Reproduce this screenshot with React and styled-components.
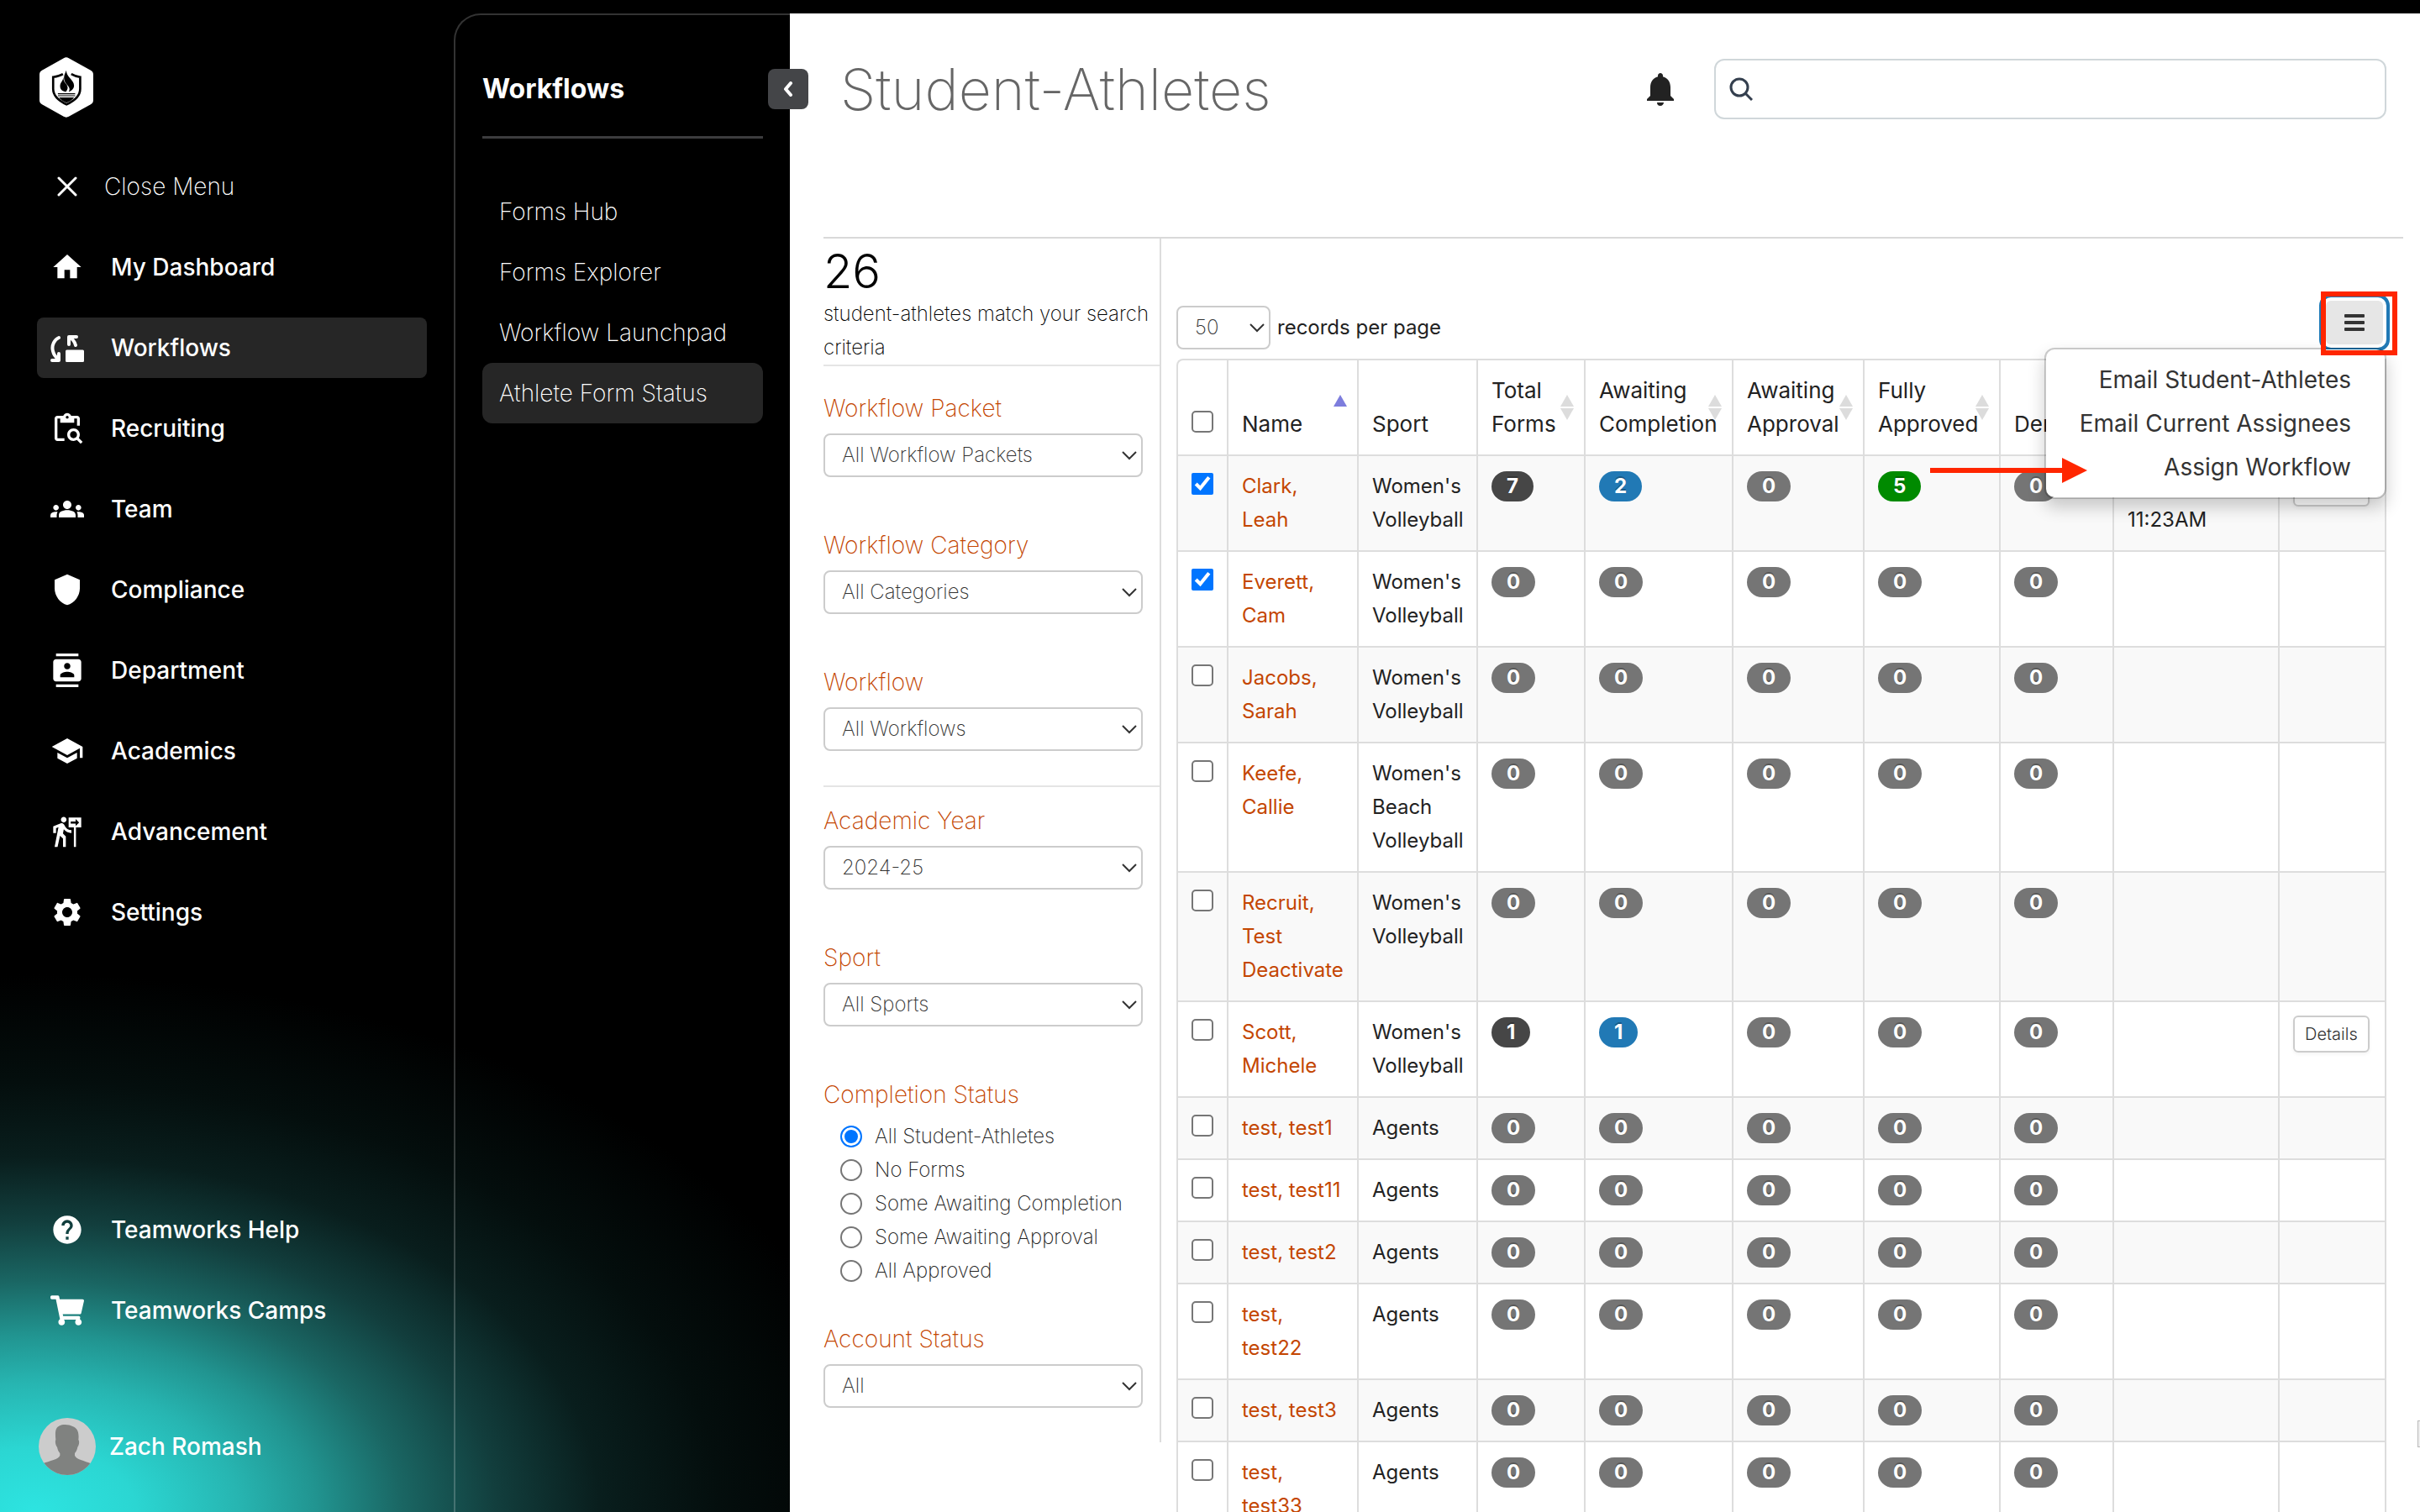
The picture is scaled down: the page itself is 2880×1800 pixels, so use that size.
import { useState } from 'react';
import styled, { createGlobalStyle, css } from 'styled-components';
import {
  MdContacts,
  MdFollowTheSigns,
  MdGroups,
  MdHelp,
  MdHome,
  MdNotifications,
  MdOutlineContentPasteSearch,
  MdSchool,
  MdSettings,
  MdShield,
} from 'react-icons/md';
import { FaShoppingCart } from 'react-icons/fa';

const WorkflowIcon = () => (
  <svg viewBox="0 0 40 40" fill="none" stroke="currentColor" strokeWidth="4" strokeLinecap="round" strokeLinejoin="round">
    <path d="M10 8C5 10 1 17 3 24c1 4 3 7 6 9" />
    <path d="M2 35h8v-8" />
    <path d="M31 7h-9v9" />
    <path d="M23 8c4 2 6 5 7 9" />
    <rect x="18" y="22.5" width="22" height="14.5" rx="1.5" fill="currentColor" stroke="none" />
  </svg>
);

const mainLinks = [
  { label: 'My Dashboard', icon: <MdHome /> },
  { label: 'Workflows', icon: <WorkflowIcon />, active: true },
  { label: 'Recruiting', icon: <MdOutlineContentPasteSearch /> },
  { label: 'Team', icon: <MdGroups /> },
  { label: 'Compliance', icon: <MdShield /> },
  { label: 'Department', icon: <MdContacts /> },
  { label: 'Academics', icon: <MdSchool /> },
  { label: 'Advancement', icon: <MdFollowTheSigns /> },
  { label: 'Settings', icon: <MdSettings /> },
];

const footerLinks = [
  { label: 'Teamworks Help', icon: <MdHelp /> },
  { label: 'Teamworks Camps', icon: <FaShoppingCart /> },
];

const subLinks = ['Forms Hub', 'Forms Explorer', 'Workflow Launchpad', 'Athlete Form Status'];

const statuses = [
  'All Student-Athletes',
  'No Forms',
  'Some Awaiting Completion',
  'Some Awaiting Approval',
  'All Approved',
];

const columns = [
  { label: 'Name', width: 155, sort: 'asc' },
  { label: 'Sport', width: 142 },
  { label: 'Total Forms', width: 128, sort: 'both' },
  { label: 'Awaiting Completion', width: 176, sort: 'both' },
  { label: 'Awaiting Approval', width: 156, sort: 'both' },
  { label: 'Fully Approved', width: 162, sort: 'both' },
  { label: 'Denied', width: 135, sort: 'both' },
  { label: 'Last Activity' },
  { label: '', width: 129 },
];

const none = [0, 0, 0, 0, 0];

const athletes = [
  { name: 'Clark, Leah', sport: "Women's Volleyball", counts: [7, 2, 0, 5, 0], date: '10/02/2024 11:23AM', details: true },
  { name: 'Everett, Cam', sport: "Women's Volleyball", counts: none },
  { name: 'Jacobs, Sarah', sport: "Women's Volleyball", counts: none },
  { name: 'Keefe, Callie', sport: "Women's Beach Volleyball", counts: none },
  { name: 'Recruit, Test Deactivate', sport: "Women's Volleyball", counts: none },
  { name: 'Scott, Michele', sport: "Women's Volleyball", counts: [1, 1, 0, 0, 0], details: true },
  { name: 'test, test1', sport: 'Agents', counts: none },
  { name: 'test, test11', sport: 'Agents', counts: none },
  { name: 'test, test2', sport: 'Agents', counts: none },
  { name: 'test, test22', sport: 'Agents', counts: none },
  { name: 'test, test3', sport: 'Agents', counts: none },
  { name: 'test, test33', sport: 'Agents', counts: none },
];

const badgeColors = ['#464646', '#2179b5', '#757575', '#008a00', '#757575'];

const Logo = () => (
  <LogoSvg viewBox="22 24 193 216" role="img" aria-label="Teamworks">
    <path
      fill="#fff"
      d="M109 27q9-5 18 0l79 44q9 5 9 15v92q0 10-9 15l-79 44q-9 5-18 0l-78-44q-9-5-9-15V86q0-10 9-15z"
    />
    <path
      fill="none"
      stroke="#000"
      strokeWidth="8"
      d="M106 84c-10 6-22 9-35 11v42c0 26 18 42 48 56 31-14 49-30 49-56V95c-12-2-22-5-32-11"
    />
    <path d="M118 71c1 12 5 18 12 26 8 9 16 17 16 28 0 11-7 18-19 23 5-9 3-15-3-22-8-9-14-16-14-28 0-11 5-18 8-27z" />
    <path d="M108 96c-1 12 4 18 10 25 7 9 7 17-1 27-13-2-21-9-21-20 0-13 10-18 12-32z" />
    <path d="M88 153h62v4H88zM88 161h62v3H88zM92 168h54c-5 8-14 14-27 19-13-5-22-11-27-19z" />
  </LogoSvg>
);

const NavLink = ({ item }) => (
  <NavItem href="#" $active={item.active}>
    {item.icon}
    {item.label}
  </NavItem>
);

const SelectField = ({ id, value, narrow }) => (
  <SelectBox $narrow={narrow}>
    <Select id={id} defaultValue={value}>
      <option>{value}</option>
    </Select>
    <svg viewBox="0 0 18 12" fill="none" stroke="currentColor" strokeWidth="2">
      <path d="M1 2l8 8 8-8" />
    </svg>
  </SelectBox>
);

const Filter = ({ label, value }) => {
  const id = label.toLowerCase().replace(/ /g, '-');
  return (
    <FilterGroup>
      <FilterLabel htmlFor={id}>{label}</FilterLabel>
      <SelectField id={id} value={value} />
    </FilterGroup>
  );
};

const App = () => {
  const [checked, setChecked] = useState(['Clark, Leah', 'Everett, Cam']);
  const [status, setStatus] = useState(statuses[0]);

  const toggle = (name) => {
    setChecked(checked.includes(name) ? checked.filter((n) => n !== name) : [...checked, name]);
  };

  return (
    <Shell>
      <GlobalStyle />
      <Sidebar>
        <Logo />
        <CloseButton>
          <svg viewBox="0 0 24 24" fill="none" stroke="currentColor" strokeWidth="3" strokeLinecap="round">
            <path d="M2 2l20 20M22 2L2 22" />
          </svg>
          Close Menu
        </CloseButton>
        <Nav aria-label="Main">
          {mainLinks.map((item) => (
            <NavLink key={item.label} item={item} />
          ))}
        </Nav>
        <FooterNav aria-label="Help">
          {footerLinks.map((item) => (
            <NavLink key={item.label} item={item} />
          ))}
        </FooterNav>
        <User href="#">
          <svg viewBox="48 84 204 204">
            <clipPath id="avatar">
              <circle cx="150" cy="186" r="102" />
            </clipPath>
            <g clipPath="url(#avatar)">
              <path fill="#ccc" d="M48 84h204v204H48z" />
              <path
                fill="#808280"
                d="M109 162c-3-28-1-44 14-50 8-6 34-6 46 2 18 6 24 22 21 49 4 2 3 18-3 25-2 12-6 16-10 22v8c4 14 34 18 60 30v50H60v-50c28-12 60-16 64-30v-8c-4-6-8-10-10-22-6-6-8-22-5-26z"
              />
            </g>
          </svg>
          Zach Romash
        </User>
      </Sidebar>

      <SubPanel>
        <SubTitle>Workflows</SubTitle>
        <CollapseButton aria-label="Collapse">
          <svg viewBox="0 0 12 18" fill="none" stroke="currentColor" strokeWidth="4" strokeLinecap="round" strokeLinejoin="round">
            <path d="M9 2L3 9l6 7" />
          </svg>
        </CollapseButton>
        <SubNav aria-label="Workflows">
          {subLinks.map((label) => (
            <SubItem key={label} href="#" $active={label === 'Athlete Form Status'}>
              {label}
            </SubItem>
          ))}
        </SubNav>
      </SubPanel>

      <Main>
        <Header>
          <Title>Student-Athletes</Title>
          <BellButton aria-label="Notifications">
            <MdNotifications />
          </BellButton>
          <SearchBox>
            <svg viewBox="0 0 28 28" fill="none" stroke="currentColor" strokeWidth="3">
              <circle cx="12" cy="12" r="10" />
              <path d="M19 19l8 8" />
            </svg>
            <SearchInput type="search" aria-label="Search" />
          </SearchBox>
        </Header>

        <Content>
          <Filters>
            <Summary>
              <Count>26</Count>
              student-athletes match your search criteria
            </Summary>
            <Section $top={30} $line>
              <Filter label="Workflow Packet" value="All Workflow Packets" />
              <Filter label="Workflow Category" value="All Categories" />
              <Filter label="Workflow" value="All Workflows" />
            </Section>
            <Section $top={20}>
              <Filter label="Academic Year" value="2024-25" />
              <Filter label="Sport" value="All Sports" />
              <FilterGroup as="fieldset">
                <FilterLabel as="legend">Completion Status</FilterLabel>
                {statuses.map((s) => (
                  <RadioRow key={s}>
                    <Radio type="radio" name="status" checked={status === s} onChange={() => setStatus(s)} />
                    {s}
                  </RadioRow>
                ))}
              </FilterGroup>
            </Section>
            <Section $top={0}>
              <Filter label="Account Status" value="All" />
            </Section>
          </Filters>

          <Records>
            <Toolbar>
              <PageSize>
                <SelectField id="page-size" value="50" narrow />
                <label htmlFor="page-size">records per page</label>
              </PageSize>
              <Actions>
                <MenuButton aria-label="Actions" aria-expanded="true">
                  <svg viewBox="0 0 24 20" fill="currentColor">
                    <rect width="24" height="4" rx="1" />
                    <rect y="8" width="24" height="4" rx="1" />
                    <rect y="16" width="24" height="4" rx="1" />
                  </svg>
                </MenuButton>
                <Menu>
                  <MenuItem>Email Student-Athletes</MenuItem>
                  <MenuItem>Email Current Assignees</MenuItem>
                  <MenuItem>Assign Workflow</MenuItem>
                </Menu>
                <Highlight />
                <Arrow viewBox="0 0 187 30" fill="#ff2600">
                  <path d="M0 12h157V0l30 15-30 15V18H0z" />
                </Arrow>
              </Actions>
            </Toolbar>

            <Table>
              <thead>
                <tr>
                  <Th $width={60}>
                    <Checkbox type="checkbox" aria-label="Select all" />
                  </Th>
                  {columns.map((c) => (
                    <Th key={c.label} $width={c.width}>
                      {c.label}
                      {c.sort && (
                        <SortIcon viewBox="0 0 16 30">
                          <path d="M8 0l8 14H0z" fill={c.sort === 'asc' ? '#7d7ddd' : '#dcdcdc'} />
                          {c.sort === 'both' && <path d="M8 30l8-14H0z" fill="#dcdcdc" />}
                        </SortIcon>
                      )}
                    </Th>
                  ))}
                </tr>
              </thead>
              <tbody>
                {athletes.map((a) => (
                  <Row key={a.name}>
                    <Td>
                      <Checkbox
                        type="checkbox"
                        aria-label={a.name}
                        checked={checked.includes(a.name)}
                        onChange={() => toggle(a.name)}
                      />
                    </Td>
                    <Td>
                      <NameLink href="#">{a.name}</NameLink>
                    </Td>
                    <Td>{a.sport}</Td>
                    {a.counts.map((n, i) => (
                      <Td key={i}>
                        <Badge $color={n ? badgeColors[i] : '#757575'}>{n}</Badge>
                      </Td>
                    ))}
                    <Td>{a.date}</Td>
                    <Td>{a.details && <DetailsButton>Details</DetailsButton>}</Td>
                  </Row>
                ))}
              </tbody>
            </Table>
          </Records>
        </Content>
      </Main>
      <EdgeTab />
    </Shell>
  );
};

const GlobalStyle = createGlobalStyle`
  * {
    box-sizing: border-box;
  }
  body {
    margin: 0;
    background-color: black;
    font-family: Inter, 'Liberation Sans', sans-serif;
    font-size: 24px;
    line-height: 40px;
    color: #222;
  }
  button, input, select {
    font: inherit;
    margin: 0;
  }
  button {
    border: none;
    padding: 0;
    background: none;
    cursor: pointer;
  }
  a {
    text-decoration: none;
  }
  svg {
    flex-shrink: 0;
    display: block;
  }
`;

const Shell = styled.div`
  position: relative;
  display: flex;
  height: 100vh;
  overflow: hidden;
  background: radial-gradient(
    ellipse 1020px 640px at 40px 100%,
    #2de4e1 0%,
    #2bd6d2 12%,
    #27b5b1 24%,
    #219490 33%,
    #1a6663 43%,
    #123e3d 54%,
    #091e1d 66%,
    #040e0d 80%,
    #000 100%
  ) black;
`;

const Sidebar = styled.div`
  flex: 0 0 540px;
  display: flex;
  flex-direction: column;
  padding: 68px 32px 44px 44px;
  color: white;
  font-size: 28px;
  font-weight: 500;
`;
const LogoSvg = styled.svg`
  width: 64px;
  height: 72px;
  margin: 0 0 46px 3px;
`;
const CloseButton = styled.button`
  display: flex;
  align-items: center;
  gap: 32px;
  height: 72px;
  margin-bottom: 24px;
  padding-left: 24px;
  color: white;
  font-weight: 200;

  svg {
    width: 24px;
    height: 24px;
  }
`;
const Nav = styled.nav`
  display: flex;
  flex-direction: column;
  gap: 24px;
`;
const FooterNav = styled(Nav)`
  margin-top: auto;
  margin-bottom: 92px;
`;
const NavItem = styled.a`
  display: flex;
  align-items: center;
  gap: 32px;
  height: 72px;
  padding-left: 16px;
  border-radius: 8px;
  color: white;
  background-color: ${(props) => (props.$active ? '#262626' : 'transparent')};

  svg {
    width: 40px;
    height: 40px;
  }
`;
const User = styled.a`
  display: flex;
  align-items: center;
  gap: 16px;
  padding-left: 2px;
  color: white;

  svg {
    width: 68px;
    height: 68px;
  }
`;

const SubPanel = styled.div`
  position: relative;
  flex: 0 0 400px;
  margin-top: 16px;
  padding: 64px 32px 0;
  border-top: 2px solid rgba(255, 255, 255, 0.2);
  border-left: 2px solid rgba(255, 255, 255, 0.2);
  border-top-left-radius: 32px;
  color: white;
`;
const SubTitle = styled.h2`
  margin: 0;
  padding-bottom: 32px;
  border-bottom: 3px solid #3c3c3e;
  font-size: 32px;
  line-height: 48px;
  font-weight: 700;
`;
const CollapseButton = styled.button`
  position: absolute;
  top: 64px;
  right: -22px;
  z-index: 1;
  display: flex;
  align-items: center;
  justify-content: center;
  width: 48px;
  height: 48px;
  border-radius: 8px;
  background-color: #444548;
  color: white;

  svg {
    width: 12px;
    height: 18px;
  }
`;
const SubNav = styled.nav`
  margin-top: 51px;
`;
const SubItem = styled.a`
  display: block;
  padding: 0 20px;
  border-radius: 12px;
  font-size: 28px;
  font-weight: 200;
  line-height: 72px;
  color: white;
  background-color: ${(props) => (props.$active ? '#262626' : 'transparent')};
`;

const Main = styled.main`
  flex: 1;
  min-width: 0;
  margin-top: 16px;
  padding: 0 20px 0 40px;
  background-color: white;
`;
const Header = styled.header`
  display: flex;
  align-items: flex-start;
  gap: 40px;
  height: 266px;
  padding: 54px 20px 0;
`;
const Title = styled.h1`
  flex: 1;
  margin: 0;
  font-size: 68px;
  line-height: 72px;
  font-weight: 200;
  color: #666;
`;
const BellButton = styled.button`
  margin-top: 12px;
  color: #222;

  svg {
    width: 48px;
    height: 48px;
  }
`;
const SearchBox = styled.div`
  flex: 0 1 800px;
  display: flex;
  align-items: center;
  gap: 16px;
  height: 72px;
  padding: 0 16px;
  border: 2px solid #d0d7da;
  border-radius: 12px;
  color: #343f4e;

  svg {
    width: 28px;
    height: 28px;
  }
`;
const SearchInput = styled.input`
  flex: 1;
  min-width: 0;
  border: none;
  outline: none;
  background: none;
`;

const Content = styled.div`
  display: flex;
  align-items: flex-start;
  border-top: 2px solid #d9d9d9;
`;

const Filters = styled.aside`
  flex: 0 0 402px;
  border-right: 2px solid #ddd;
`;
const Summary = styled.div`
  padding-top: 8px;
  border-bottom: 2px solid #e5e5e5;
  color: black;
  font-weight: 200;
`;
const Count = styled.div`
  font-size: 56px;
  line-height: 62px;
  font-weight: 300;
`;
const Section = styled.div`
  display: flex;
  flex-direction: column;
  gap: 61px;
  padding: ${(props) => props.$top}px 20px 41px 0;
  ${(props) => props.$line && css`
    border-bottom: 2px solid #e5e5e5;
  `}
`;
const FilterGroup = styled.div`
  min-width: 0;
  margin: 0;
  padding: 0;
  border: none;
`;
const FilterLabel = styled.label`
  display: block;
  margin-bottom: 10px;
  padding: 0;
  font-size: 28px;
  font-weight: 200;
  color: #c44601;
`;
const SelectBox = styled.div`
  position: relative;
  width: ${(props) => (props.$narrow ? '112px' : '100%')};
  color: #333;

  svg {
    position: absolute;
    top: 20px;
    right: 7px;
    width: 18px;
    height: 12px;
    pointer-events: none;
  }
`;
const Select = styled.select`
  display: block;
  appearance: none;
  width: 100%;
  height: 52px;
  padding: 0 20px;
  border: 2px solid #ccc;
  border-radius: 8px;
  background-color: white;
  color: #333;
  font-weight: 200;
`;
const RadioRow = styled.label`
  display: flex;
  align-items: center;
  gap: 15px;
  padding-left: 20px;
  font-weight: 200;
  white-space: nowrap;
`;
const Radio = styled.input`
  appearance: none;
  width: 26px;
  height: 26px;
  border: 2px solid #767676;
  border-radius: 50%;
  background-color: white;

  &:checked {
    border-color: #0075ff;
    background-color: #0075ff;
    box-shadow: inset 0 0 0 3px white;
  }
`;

const Records = styled.section`
  flex: 1;
  min-width: 0;
  padding: 74px 20px 0 18px;
`;
const Toolbar = styled.div`
  display: flex;
  justify-content: space-between;
  align-items: flex-start;
  padding: 0 4px 11px 0;
`;
const PageSize = styled.div`
  display: flex;
  align-items: center;
  gap: 8px;
  padding-top: 6px;
`;
const Actions = styled.div`
  position: relative;
  z-index: 2;
`;
const MenuButton = styled.button`
  display: flex;
  align-items: center;
  justify-content: center;
  width: 68px;
  height: 52px;
  border-radius: 6px;
  background-color: #e6e6e6;
  box-shadow: 0 0 0 4px white, 0 0 0 8px #2179b5;
  color: #333;

  svg {
    width: 24px;
    height: 20px;
  }
`;
const Menu = styled.div`
  position: absolute;
  top: 56px;
  right: -4px;
  display: flex;
  flex-direction: column;
  padding: 10px 0;
  border: 2px solid rgba(0, 0, 0, 0.2);
  border-radius: 12px;
  background-color: white;
  background-clip: padding-box;
  box-shadow: 0 10px 20px rgba(0, 0, 0, 0.2);
`;
const MenuItem = styled.button`
  padding: 0 40px;
  font-size: 28px;
  line-height: 52px;
  text-align: right;
  white-space: nowrap;
  color: #333;
`;
const Highlight = styled.div`
  position: absolute;
  inset: -11px -17px -13px -6px;
  border: 6px solid #ff2600;
  pointer-events: none;
`;
const Arrow = styled.svg`
  position: absolute;
  top: 187px;
  right: 352px;
  width: 187px;
  height: 30px;
  pointer-events: none;
`;

const Table = styled.table`
  width: 100%;
  table-layout: fixed;
  border-collapse: separate;
  border-spacing: 0;
`;
const cell = css`
  padding: 16px;
  border-top: 2px solid #ddd;
  border-left: 2px solid #ddd;
  text-align: left;

  &:last-child {
    border-right: 2px solid #ddd;
  }
`;
const Th = styled.th`
  ${cell}
  position: relative;
  width: ${(props) => (props.$width ? `${props.$width}px` : 'auto')};
  vertical-align: bottom;
  font-size: 26px;
  font-weight: 400;

  &:first-child {
    border-top-left-radius: 8px;
  }
`;
const Td = styled.td`
  ${cell}
  vertical-align: top;
`;
const Row = styled.tr`
  &:nth-child(odd) {
    background-color: #f9f9f9;
  }
`;
const SortIcon = styled.svg`
  position: absolute;
  top: 41px;
  right: 12px;
  width: 16px;
  height: 30px;
`;
const Checkbox = styled.input`
  display: block;
  appearance: none;
  width: 26px;
  height: 26px;
  margin: 4px 0 10px;
  border: 2px solid #767676;
  border-radius: 5px;
  background-color: white;
  accent-color: #0075ff;

  &:checked {
    appearance: auto;
  }
`;
const NameLink = styled.a`
  color: #c44601;
`;
const Badge = styled.span`
  display: block;
  width: fit-content;
  margin-top: 2px;
  padding: 4px 18px;
  border-radius: 18px;
  background-color: ${(props) => props.$color};
  color: white;
  font-weight: 700;
  line-height: 28px;
  text-shadow: 0 -2px 0 rgba(0, 0, 0, 0.25);
`;
const DetailsButton = styled.button`
  display: block;
  padding: 0 12px;
  border: 2px solid #ccc;
  border-radius: 6px;
  background-color: white;
  box-shadow: 0 2px 4px rgba(0, 0, 0, 0.05);
  color: #333;
  font-size: 20px;
  font-weight: 300;
`;

const EdgeTab = styled.div`
  position: absolute;
  right: 0;
  bottom: 77px;
  width: 3px;
  height: 32px;
  border: 1px solid #bbb;
  border-right: none;
  background-color: #eee;
`;

export default App;
